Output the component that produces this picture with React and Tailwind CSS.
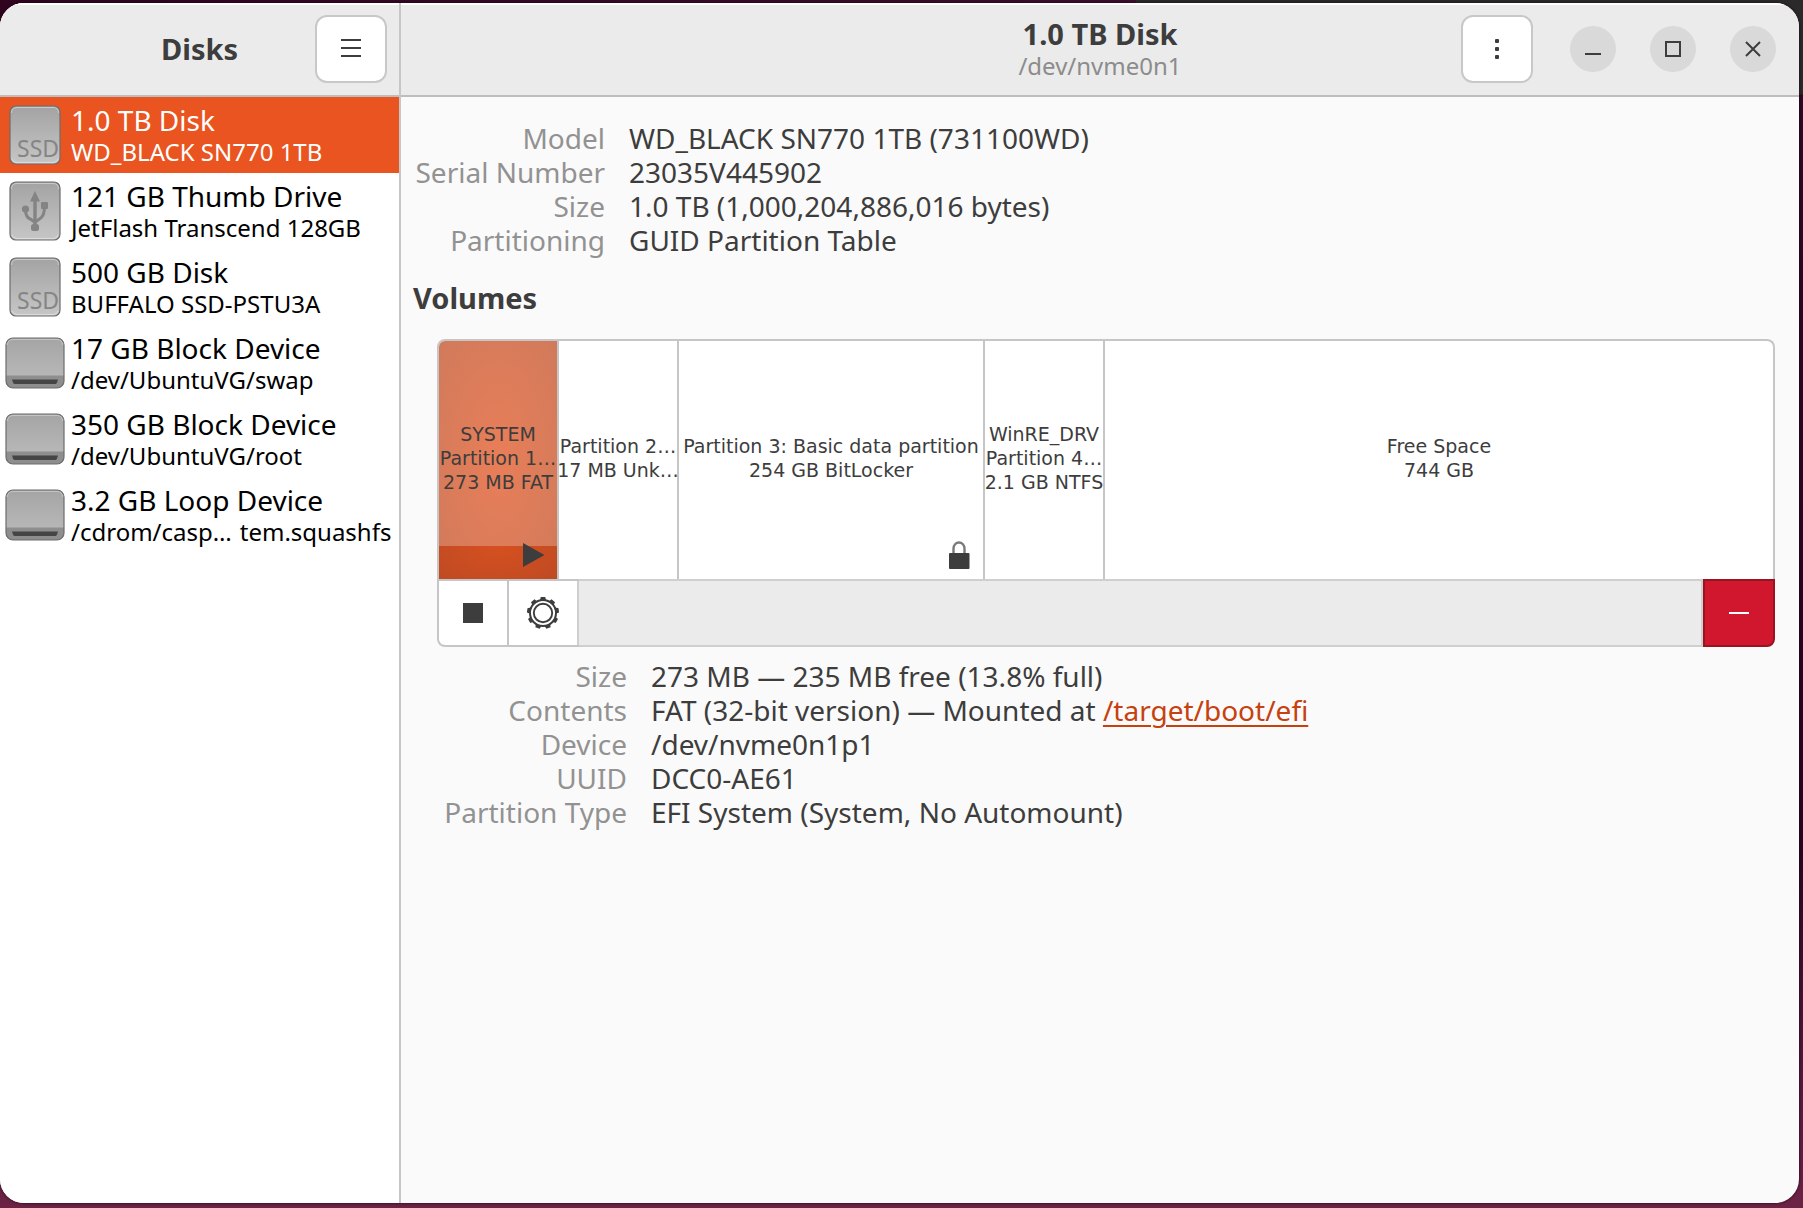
import React from 'react';
import clsx from 'clsx';

const devices = [
  { id: 'nvme', icon: 'ssd', name: '1.0 TB Disk', detail: 'WD_BLACK SN770 1TB' },
  { id: 'usb', icon: 'usb', name: '121 GB Thumb Drive', detail: 'JetFlash Transcend 128GB' },
  { id: 'ssd', icon: 'ssd', name: '500 GB Disk', detail: 'BUFFALO SSD-PSTU3A' },
  { id: 'swap', icon: 'block', name: '17 GB Block Device', detail: '/dev/UbuntuVG/swap' },
  { id: 'root', icon: 'block', name: '350 GB Block Device', detail: '/dev/UbuntuVG/root' },
  { id: 'loop', icon: 'block', name: '3.2 GB Loop Device', detail: '/cdrom/casp…\u2004tem.squashfs' },
];

const driveInfo = [
  ['Model', 'WD_BLACK SN770 1TB (731100WD)'],
  ['Serial Number', '23035V445902'],
  ['Size', '1.0 TB (1,000,204,886,016 bytes)'],
  ['Partitioning', 'GUID Partition Table'],
];

const volumes = [
  { lines: ['SYSTEM', 'Partition 1…', '273 MB FAT'], used: 14, icon: 'play' },
  { lines: ['Partition 2…', '17 MB Unk…'] },
  { lines: ['Partition 3: Basic data partition', '254 GB BitLocker'], icon: 'lock' },
  { lines: ['WinRE_DRV', 'Partition 4…', '2.1 GB NTFS'] },
  { lines: ['Free Space', '744 GB'] },
];

const volumeInfo = [
  ['Size', '273 MB — 235 MB free (13.8% full)'],
  [
    'Contents',
    <>
      FAT (32-bit version) — Mounted at{' '}
      <a href="#efi" className="text-[#c7400f] underline decoration-2 underline-offset-4">/target/boot/efi</a>
    </>,
  ],
  ['Device', '/dev/nvme0n1p1'],
  ['UUID', 'DCC0-AE61'],
  ['Partition Type', 'EFI System (System, No Automount)'],
];

const DriveGradients = () => (
  <svg width="0" height="0" className="absolute" aria-hidden="true">
    <defs>
      <linearGradient id="tall" x1="0" y1="0" x2="0" y2="1">
        <stop offset="0" stopColor="#a3a3a3" />
        <stop offset="1" stopColor="#c6c6c6" />
      </linearGradient>
      <linearGradient id="wide" x1="0" y1="0" x2="0" y2="1">
        <stop offset="0" stopColor="#a4a4a4" />
        <stop offset="1" stopColor="#bdbdbd" />
      </linearGradient>
    </defs>
  </svg>
);

const DriveIcon = ({ type }) => {
  if (type === 'block') {
    return (
      <svg viewBox="0 0 64 64" className="size-16 shrink-0" aria-hidden="true">
        <rect x="2" y="7" width="58" height="50" rx="7" fill="url(#wide)" />
        <path d="M2 44.500H60V50a7 7 0 0 1-7 7H9a7 7 0 0 1-7-7Z" fill="#8e8e8e" />
        <path d="M8 48.500H54L53 51.500Q52.500 53 51 53H11Q9.500 53 9 51.500Z" fill="#454545" />
        <path d="M3.500 14Q3.500 8.500 9 8.500H53Q58.500 8.500 58.500 14" fill="none" stroke="#c4c4c4" />
        <rect x="2" y="7" width="58" height="50" rx="7" fill="none" stroke="#6c6c6c" strokeWidth="1.200" />
      </svg>
    );
  }
  return (
    <svg viewBox="0 0 64 64" className="size-16 shrink-0" aria-hidden="true">
      <rect x="6" y="3" width="50" height="58" rx="6" fill="url(#tall)" />
      {type === 'ssd' ? (
        <text x="13" y="54" fontSize="23" fontFamily="Noto Sans, sans-serif" fill="#858585">SSD</text>
      ) : (
        <g fill="none" stroke="#848484" strokeWidth="3">
          <path d="M31 50V20" stroke="#848484" strokeWidth="3.500" />
          <path d="M31 43.500C27 39 21.500 40.500 21.500 31M31 43.500C35 39 40.500 40.500 40.500 27" />
          <path d="M31 12L36 22.500H26Z" fill="#848484" stroke="none" />
          <circle cx="21.500" cy="30" r="3.600" fill="#848484" stroke="none" />
          <rect x="37" y="23" width="7" height="7" rx="1" fill="#848484" stroke="none" />
          <rect x="27" y="45" width="8" height="7" rx="2.500" fill="#848484" stroke="none" />
        </g>
      )}
      <path d="M7.500 10Q7.500 4.500 13 4.500H49Q54.500 4.500 54.500 10" fill="none" stroke="#c9c9c9" />
      <path d="M8 56Q9 59.500 13 59.500H49Q53 59.500 54 56" fill="none" stroke="#dcdcdc" />
      <rect x="6" y="3" width="50" height="58" rx="6" fill="none" stroke="#6c6c6c" strokeWidth="1.200" />
    </svg>
  );
};

const teeth = [0, 40, 80, 120, 160, 200, 240, 280, 320];

const GearIcon = () => (
  <svg viewBox="0 0 32 32" className="size-8" fill="none" stroke="#3d3d3d" aria-hidden="true">
    <circle cx="16" cy="16" r="13" strokeWidth="2" />
    <circle cx="16" cy="16" r="9.200" strokeWidth="1.900" />
    {teeth.map((a) => (
      <path key={a} d="M13 3.500L13.700 0H18.300L19 3.500Z" fill="#3d3d3d" stroke="none" transform={`rotate(${a} 16 16)`} />
    ))}
  </svg>
);

const VolumeIcon = ({ type }) => (
  <svg viewBox="0 0 32 32" className="absolute right-2 bottom-2 size-8" aria-hidden="true">
    {type === 'play' ? (
      <path d="M6 4L27.500 16L6 28Z" fill="#3d3d3d" />
    ) : (
      <>
        <path d="M10.500 15V9.500a5.500 6 0 0 1 11 0V15" fill="none" stroke="#7a7a7a" strokeWidth="2.400" />
        <rect x="6" y="14" width="20.500" height="16" rx="1" fill="#3d3d3d" />
      </>
    )}
  </svg>
);

const HeaderButton = ({ label, children }) => (
  <button
    aria-label={label}
    className="flex h-[68px] w-[72px] items-center justify-center rounded-xl border-2 border-[#c8c8c8] bg-white"
  >
    {children}
  </button>
);

const WindowButton = ({ label, d }) => (
  <button aria-label={label} className="flex size-[46px] items-center justify-center rounded-full bg-[#d9d9d9]">
    <svg viewBox="0 0 16 16" className="size-4 overflow-visible" fill="none" stroke="#3d3d3d" strokeWidth="2">
      <path d={d} />
    </svg>
  </button>
);

const InfoList = ({ items, className }) => (
  <dl className={clsx('grid gap-x-6 leading-[34px]', className)}>
    {items.map(([label, value]) => (
      <React.Fragment key={label}>
        <dt className="text-right whitespace-nowrap text-[#929292]">{label}</dt>
        <dd>{value}</dd>
      </React.Fragment>
    ))}
  </dl>
);

const Sidebar = () => (
  <aside className="flex w-[401px] shrink-0 flex-col border-r-2 border-[#c6c6c6] bg-white">
    <header className="grid grid-cols-[1fr_auto_1fr] items-center border-t-2 border-b-2 border-t-white border-b-[#bdbdbd] bg-[#ebebeb] px-3 pt-[10px] pb-3">
      <h1 className="col-start-2 text-[29px] leading-[34px] font-bold">Disks</h1>
      <div className="flex justify-end">
        <HeaderButton label="Menu">
          <svg viewBox="0 0 20 20" className="size-5" fill="#3d3d3d">
            <path d="M0 0h20v2H0zM0 8h20v2H0zM0 16h20v2H0z" />
          </svg>
        </HeaderButton>
      </div>
    </header>
    <ul className="text-black">
      {devices.map((device, index) => (
        <li key={device.id}>
          <button
            className={clsx(
              'flex h-[76px] w-full items-center gap-[3px] pl-1 text-left whitespace-nowrap',
              index === 0 && 'bg-[#e95420] text-white'
            )}
          >
            <DriveIcon type={device.icon} />
            <span>
              <span className="block leading-[34px]">{device.name}</span>
              <span className="block text-2xl leading-[30px]">{device.detail}</span>
            </span>
          </button>
        </li>
      ))}
    </ul>
  </aside>
);

const Volumes = () => (
  <div>
    <div className="grid h-60 grid-cols-[120fr_120fr_306fr_120fr_668fr] overflow-hidden rounded-t-lg border-2 border-b-0 border-[#c6c6c6] bg-white">
      {volumes.map((volume) => (
        <button
          key={volume.lines[0]}
          className={clsx(
            'relative flex min-w-0 items-center justify-center border-r-2 border-[#c6c6c6] pb-1 font-["DejaVu_Sans",sans-serif] text-[19px] leading-6 whitespace-nowrap last:border-r-0',
            volume.used && 'bg-[radial-gradient(ellipse_at_center,#e97e58_0%,#d07a5b_100%)]'
          )}
        >
          {volume.used && (
            <span
              className="absolute inset-x-0 bottom-0 bg-[radial-gradient(ellipse_at_top,#d65020_0%,#bf4a23_100%)]"
              style={{ height: `${volume.used}%` }}
            />
          )}
          <span className="relative">
            {volume.lines.map((line) => (
              <span key={line} className="block">{line}</span>
            ))}
          </span>
          {volume.icon && <VolumeIcon type={volume.icon} />}
        </button>
      ))}
    </div>
    <div className="flex h-[68px]">
      <div className="flex overflow-hidden rounded-bl-lg border-2 border-r-0 border-[#c6c6c6] bg-white">
        <button aria-label="Unmount" className="flex w-[70px] items-center justify-center border-r-2 border-[#c6c6c6]">
          <span className="size-5 bg-[#3d3d3d]" />
        </button>
        <button aria-label="Partition options" className="flex w-[70px] items-center justify-center border-r-2 border-[#cfcfcf]">
          <GearIcon />
        </button>
      </div>
      <div className="flex-1 border-y-2 border-r-2 border-[#cfcfcf] bg-[#ebebeb]" />
      <button
        aria-label="Delete partition"
        className="flex w-[72px] items-center justify-center rounded-br-lg border-2 border-[#98141f] bg-[#d0172d]"
      >
        <span className="h-[2px] w-5 bg-white" />
      </button>
    </div>
  </div>
);

export default function App() {
  return (
    <div className='flex min-h-screen [background:linear-gradient(to_right,#30041f,#3d0f2c)_0_0/63%_30px_no-repeat,linear-gradient(to_bottom,#2a2a2a_0,#2a2a2a_94px,#2b0a22_95px,#260720_70%,#5a1c3e_92%,#6b2245_100%)] pt-[3px] pr-1 pb-[5px] font-["Noto_Sans",sans-serif] text-[28px] text-[#3d3d3d]'>
      <DriveGradients />
      <div className="flex flex-1 overflow-hidden rounded-3xl bg-[#fafafa] shadow-[0_0_3px_#1a0512]">
        <Sidebar />
        <main className="min-w-0 flex-1">
          <header className="grid grid-cols-[1fr_auto_1fr] items-center border-t-2 border-b-2 border-t-white border-b-[#bdbdbd] bg-[#ebebeb] px-[23px] pt-[10px] pb-3">
            <div className="col-start-2 text-center">
              <h2 className="text-[29px] leading-[34px] font-bold">1.0 TB Disk</h2>
              <p className="text-2xl leading-[30px] text-[#8c8c8c]">/dev/nvme0n1</p>
            </div>
            <div className="flex items-center justify-end gap-[37px]">
              <HeaderButton label="Drive options">
                <svg viewBox="0 0 4 20" className="h-5 w-1" fill="#3d3d3d">
                  <rect width="4" height="4" rx="1" />
                  <rect y="8" width="4" height="4" rx="1" />
                  <rect y="16" width="4" height="4" rx="1" />
                </svg>
              </HeaderButton>
              <div className="flex gap-[34px]">
                <WindowButton label="Minimize" d="M0 13H16" />
                <WindowButton label="Maximize" d="M1 1H15V15H1Z" />
                <WindowButton label="Close" d="M1 1L15 15M15 1L1 15" />
              </div>
            </div>
          </header>
          <div className="pt-6 pr-6 pl-3">
            <InfoList items={driveInfo} className="grid-cols-[192px_1fr]" />
            <h3 className="mt-6 mb-6 text-[29px] leading-[34px] font-bold">Volumes</h3>
            <div className="pl-6">
              <Volumes />
              <InfoList items={volumeInfo} className="mt-3 grid-cols-[190px_1fr]" />
            </div>
          </div>
        </main>
      </div>
    </div>
  );
}
